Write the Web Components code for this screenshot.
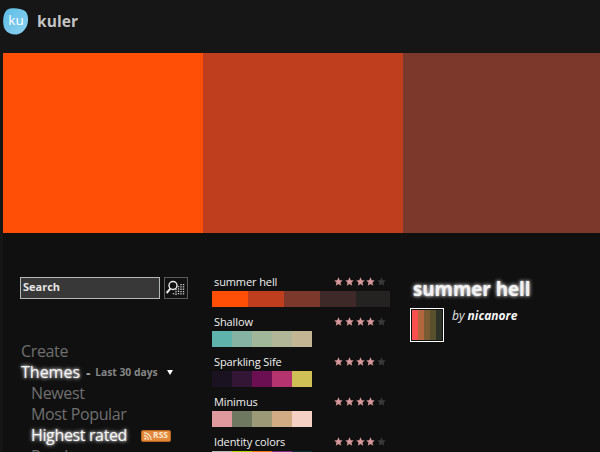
<!DOCTYPE html>
<html>
<head>
<meta charset="utf-8">
<style>
  html, body { margin: 0; height: 452px; overflow: hidden; background: #161616; }
  body { font-family: "Open Sans", "Noto Sans", sans-serif; }
</style>
</head>
<body>
<kuler-app></kuler-app>
<script>
// Small header with the logo blob and product name
class KulerHeader extends HTMLElement {
  constructor() {
    super();
    this.attachShadow({ mode: 'open' });
    this.shadowRoot.innerHTML = `
      <style>
        :host { display: flex; align-items: center; height: 53px; box-sizing: border-box; padding: 0 0 11px 3px; gap: 8px; background: #161616; }
        .blob { width: 26px; height: 27px; position: relative; flex: none; }
        svg { display: block; }
        .ku { position: absolute; inset: 0; display: flex; align-items: center; justify-content: center; color: #fff; font-size: 13.5px; font-weight: 500; line-height: 1; }
        .name { color: #c4c4c4; font-size: 15.5px; font-weight: 700; letter-spacing: .1px; }
      </style>
      <div class="blob">
        <svg width="26" height="27" viewBox="0 0 26 27">
          <defs><linearGradient id="g" x1="0" y1="0" x2="1" y2="1"><stop offset="0" stop-color="#5cbce6"/><stop offset="1" stop-color="#8ed2f0"/></linearGradient></defs>
          <path d="M7 .6C12 -.2 18 .4 22 3 25 5 25.6 11 24.6 15.5 23.6 20 20 25 15 26.2 10 27.2 5 25.6 2.4 22 -.4 18 -.2 11 1 7 2 3.4 4 1.2 7 .6Z" fill="url(#g)"/>
        </svg>
        <span class="ku">ku</span>
      </div>
      <span class="name">kuler</span>
    `;
  }
}

// Big three colour band under the header
class ColorBand extends HTMLElement {
  constructor() {
    super();
    this.attachShadow({ mode: 'open' });
    const colors = (this.getAttribute('colors') || '').split(',');
    this.shadowRoot.innerHTML = `
      <style>
        :host { display: flex; height: 180px; margin-left: 3px; }
        div { flex: 0 0 200px; }
      </style>
      ${colors.map(c => `<div style="background:${c}"></div>`).join('')}
    `;
  }
}

class SearchBox extends HTMLElement {
  constructor() {
    super();
    this.attachShadow({ mode: 'open' });
    this.shadowRoot.innerHTML = `
      <style>
        :host { display: flex; gap: 4px; height: 22px; }
        .field { width: 140px; box-sizing: border-box; border: 1px solid #b4b8b4; background: #383838; color: #e6e6e6; font-size: 11px; font-weight: 700; line-height: 17px; padding-left: 2px; }
        .btn { width: 24px; box-sizing: border-box; border: 1px solid #5a5a5a; background: #111; }
        svg { display: block; }
      </style>
      <div class="field">Search</div>
      <div class="btn">
        <svg width="22" height="20" viewBox="0 0 22 20">
          <circle cx="8" cy="7.5" r="4" fill="none" stroke="#ececec" stroke-width="1.4"/>
          <path d="M5.4 10.6 1.6 15" stroke="#ececec" stroke-width="2" fill="none"/>
          <path d="M13.5 8v9M16 6v11M18.5 6v11M11 11v6M8.5 15v2" stroke="#c8c8c8" stroke-width="1.4" stroke-dasharray="1.3 1" fill="none"/>
        </svg>
      </div>
    `;
  }
}

// Left navigation
class SideNav extends HTMLElement {
  constructor() {
    super();
    this.attachShadow({ mode: 'open' });
    this.shadowRoot.innerHTML = `
      <style>
        :host { display: block; color: #6f6f6f; font-size: 16px; line-height: 21px; letter-spacing: -.36px; white-space: nowrap; }
        .on { color: #f4f4f4; text-shadow: 0 0 4px #fff, 0 0 2px #aaa; }
        .wide { letter-spacing: 0; }
        .sub { padding-left: 10px; }
        .row { display: flex; align-items: center; height: 21px; }
        .range { color: #868686; font-size: 10.3px; font-weight: 700; letter-spacing: 0; margin-left: 5px; }
        .dash { color: #a0a0a0; font-weight: 700; margin-left: 6px; font-size: 14px; }
        .arrow { width: 0; height: 0; border: 3px solid transparent; border-top: 5px solid #fff; border-bottom: 0; margin-left: 9px; }
        .rss { display: inline-flex; align-items: center; gap: 1px; height: 12px; box-sizing: border-box; padding: 0 2px; margin-left: 14px; background: #e28a3a; border: 1px solid #b8641f; border-radius: 2px; color: #fde6cf; font-size: 8.5px; font-weight: 700; letter-spacing: 0; line-height: 1; }
        svg { display: block; }
      </style>
      <div class="row">Create</div>
      <div class="row"><span class="on wide">Themes</span><span class="dash">-</span><span class="range">Last 30 days</span><span class="arrow"></span></div>
      <div class="row sub">Newest</div>
      <div class="row sub">Most Popular</div>
      <div class="row sub"><span class="on">Highest rated</span><span class="rss"><svg width="8" height="8" viewBox="0 0 7 7"><circle cx="1.2" cy="5.8" r="1" fill="#fde6cf"/><path d="M0 3.2a3.8 3.8 0 0 1 3.8 3.8M0 .8A6.2 6.2 0 0 1 6.2 7" fill="none" stroke="#fde6cf"/></svg>RSS</span></div>
      <div class="row sub">Random</div>
    `;
  }
}

class StarRating extends HTMLElement {
  constructor() {
    super();
    this.attachShadow({ mode: 'open' });
    const n = parseInt(this.getAttribute('value') || '0');
    let out = '';
    for (let i = 0; i < 5; i++) {
      out += `<svg width="9" height="9" viewBox="0 0 10 10"><path d="M5 .3 6.4 3.5 9.8 3.8 7.2 6.1 8 9.6 5 7.8 2 9.6 2.8 6.1 .2 3.8 3.6 3.5Z" fill="${i < n ? '#d99a9c' : '#3a3a3a'}"/></svg>`;
    }
    this.shadowRoot.innerHTML = `
      <style>
        :host { display: flex; gap: 1.7px; }
        svg { display: block; }
      </style>
      ${out}
    `;
  }
}

// One row of the theme list: name, stars and the colour strip
class ThemeRow extends HTMLElement {
  constructor() {
    super();
    this.attachShadow({ mode: 'open' });
    const colors = (this.getAttribute('colors') || '').split(',');
    const cells = (this.getAttribute('cells') || '20,20,20,20,20').split(',');
    this.shadowRoot.innerHTML = `
      <style>
        :host { display: block; height: 40px; }
        .top { display: flex; justify-content: space-between; align-items: center; box-sizing: content-box; height: 16px; padding: 0 4px 2px 2px; width: 172px; }
        .name { color: #f0f0f0; font-size: 11px; letter-spacing: -.1px; }
        .strip { display: flex; height: 16px; }
        .strip div { height: 100%; }
      </style>
      <div class="top"><span class="name"><slot></slot></span><star-rating value="4"></star-rating></div>
      <div class="strip">${colors.map((c, i) => `<div style="background:${c};width:${cells[i]}px"></div>`).join('')}</div>
    `;
  }
}

// Detail of the selected theme on the right
class ThemeDetail extends HTMLElement {
  constructor() {
    super();
    this.attachShadow({ mode: 'open' });
    const swatch = ['#f84f4f', '#b4663c', '#7a5c34', '#59502e', '#2e3328'];
    this.shadowRoot.innerHTML = `
      <style>
        :host { display: block; color: #f2f2f2; }
        h2 { margin: 0 0 0 3px; font-size: 18.7px; font-weight: 700; line-height: 24px; text-shadow: 0 0 4px #fff, 0 0 2px #bbb; white-space: nowrap; }
        .info { display: flex; gap: 8px; margin-top: 7px; }
        .thumb { display: flex; width: 34px; height: 34px; box-sizing: border-box; border: 1px solid #fff; padding: 1px; background: #111; }
        .thumb div { flex: 1; }
        .by { font-size: 12px; font-style: italic; line-height: 16px; color: #e4e4e4; }
        .by b { color: #f6f6f6; }
      </style>
      <h2>summer hell</h2>
      <div class="info">
        <div class="thumb">${swatch.map(c => `<div style="background:${c}"></div>`).join('')}</div>
        <div class="by">by <b>nicanore</b></div>
      </div>
    `;
  }
}

// Page shell, lays out the header, band and three columns
class KulerApp extends HTMLElement {
  constructor() {
    super();
    this.attachShadow({ mode: 'open' });
    this.shadowRoot.innerHTML = `
      <style>
        :host { display: block; width: 600px; height: 452px; overflow: hidden; background: #161616; }
        .main { display: grid; grid-template-columns: 209px 198px 1fr; margin-left: 3px; padding: 44px 0 0 0; height: 219px; box-sizing: border-box; background: #101010; overflow: hidden; }
        .left { padding-left: 17px; }
        search-box { margin-bottom: 42px; }
        side-nav { margin-left: 1px; }
        .list { margin-top: -4px; }
      </style>
      <kuler-header></kuler-header>
      <color-band colors="#ff4e06,#bf3e1d,#7c382b"></color-band>
      <div class="main">
        <div class="left">
          <search-box></search-box>
          <side-nav></side-nav>
        </div>
        <div class="list">
          <theme-row cells="36,36,36,36,34" colors="#ff4e06,#bf3e1d,#7c382b,#3f2828,#242321">summer hell</theme-row>
          <theme-row colors="#5fb3ad,#85b2a2,#a0b79a,#b0b697,#c4b595">Shallow</theme-row>
          <theme-row colors="#1a1220,#331635,#6c0f52,#b5346f,#cfc055">Sparkling Sife</theme-row>
          <theme-row colors="#e09a9d,#6e775f,#9c9a76,#d1ab84,#f4cfc4">Minimus</theme-row>
          <theme-row colors="#b6b6b0,#b5d300,#f07a10,#7a2a80,#12303a">Identity colors</theme-row>
        </div>
        <theme-detail></theme-detail>
      </div>
    `;
  }
}

customElements.define('kuler-header', KulerHeader);
customElements.define('color-band', ColorBand);
customElements.define('search-box', SearchBox);
customElements.define('side-nav', SideNav);
customElements.define('star-rating', StarRating);
customElements.define('theme-row', ThemeRow);
customElements.define('theme-detail', ThemeDetail);
customElements.define('kuler-app', KulerApp);
</script>
</body>
</html>
